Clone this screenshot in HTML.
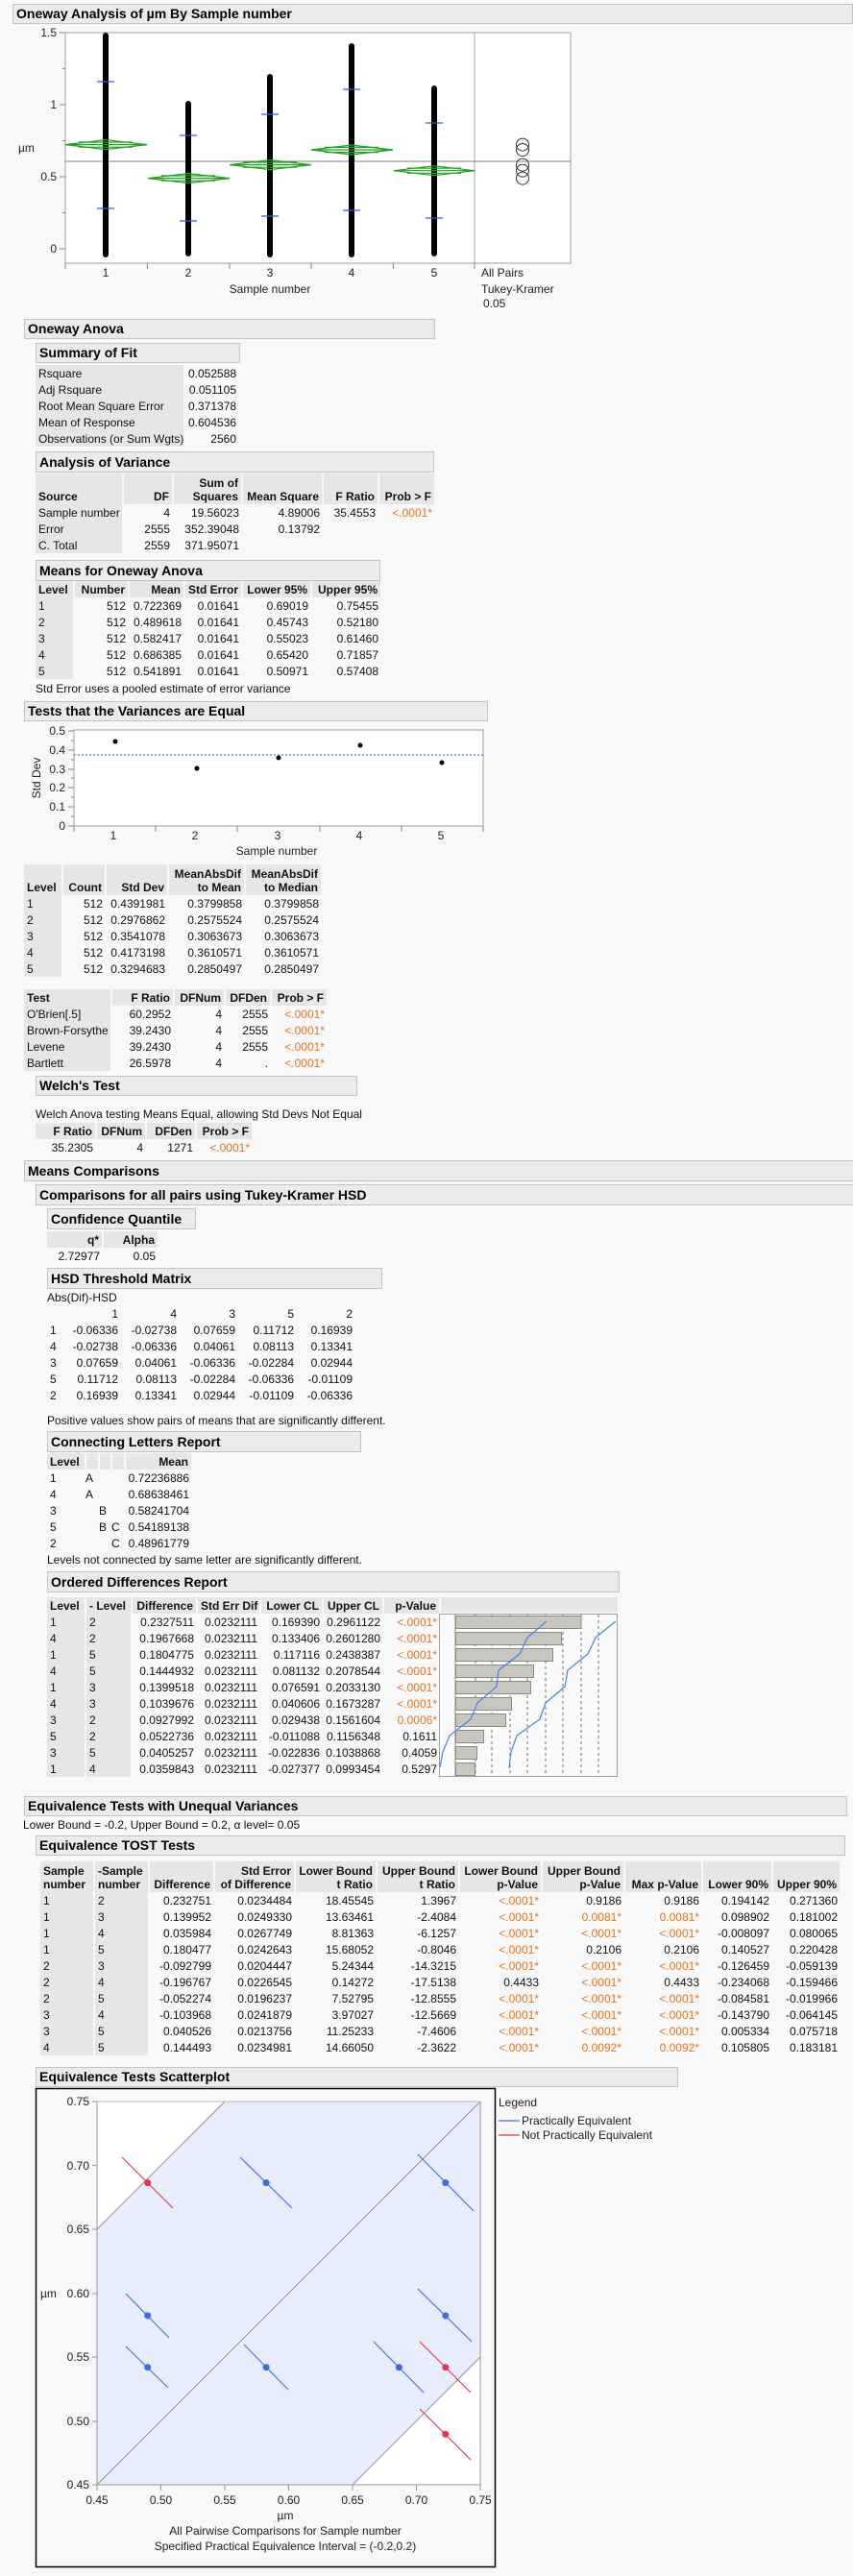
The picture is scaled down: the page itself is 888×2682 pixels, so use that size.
<!DOCTYPE html>
<html><head><meta charset="utf-8">
<style>
*{box-sizing:border-box}
body{margin:0;width:888px;height:2682px;background:#f8f8f8;font-family:"Liberation Sans",Arial,sans-serif;font-size:12px;color:#111;position:relative;overflow:hidden}
.h{position:absolute;background:#ebebeb;border:1px solid #c4c4c4;font-weight:bold;font-size:14px;padding-left:3px;white-space:nowrap;overflow:hidden;color:#000}
.x{position:absolute;white-space:nowrap;font-size:12px;line-height:14px}
table{position:absolute;border-collapse:collapse;table-layout:fixed;font-size:12px}
td,th{height:17px;padding:0 3px;white-space:nowrap;line-height:14px;overflow:hidden}
th{background:#e6e6e6;font-weight:bold;text-align:right;vertical-align:bottom;border-right:2px solid #f8f8f8;padding-bottom:1px}
td{text-align:right}
td.l{background:#e6e6e6;text-align:left;border-right:2px solid #f8f8f8}
th.l{text-align:left}
td.n{text-align:left}
.o{color:#e8731c}
svg{position:absolute;left:0;top:0}
</style></head><body>
<svg width="888" height="2682" font-family="Liberation Sans, Arial, sans-serif" font-size="12">
<!-- Plot 1 -->
<rect x="68" y="34" width="426" height="240" fill="#fff" stroke="#a0a0a0"/>
<rect x="494" y="34" width="100" height="240" fill="#fff" stroke="#a0a0a0"/>
<g stroke="#888"><line x1="62" y1="34" x2="68" y2="34"/><line x1="62" y1="109" x2="68" y2="109"/><line x1="62" y1="184" x2="68" y2="184"/><line x1="62" y1="259" x2="68" y2="259"/>
<line x1="65" y1="71.5" x2="68" y2="71.5"/><line x1="65" y1="146.5" x2="68" y2="146.5"/><line x1="65" y1="221.5" x2="68" y2="221.5"/>
<line x1="68" y1="274" x2="68" y2="280"/><line x1="153.5" y1="274" x2="153.5" y2="280"/><line x1="239" y1="274" x2="239" y2="280"/><line x1="324" y1="274" x2="324" y2="280"/><line x1="409.5" y1="274" x2="409.5" y2="280"/><line x1="494" y1="274" x2="494" y2="280"/></g>
<g text-anchor="end" fill="#222"><text x="59" y="38">1.5</text><text x="59" y="113">1</text><text x="59" y="188">0.5</text><text x="59" y="263">0</text></g>
<text x="19" y="158" fill="#222">µm</text>
<g text-anchor="middle" fill="#222"><text x="110" y="288">1</text><text x="196" y="288">2</text><text x="281" y="288">3</text><text x="366" y="288">4</text><text x="452" y="288">5</text><text x="281" y="305">Sample number</text></g>
<text x="501" y="288" fill="#222">All Pairs</text><text x="501" y="305" fill="#222">Tukey-Kramer</text><text x="503" y="320" fill="#222">0.05</text>
<line x1="68" y1="168" x2="594" y2="168" stroke="#808080"/>
<g stroke="#000" stroke-width="6" stroke-linecap="round"><line x1="110" y1="37" x2="110" y2="265"/><line x1="196" y1="108" x2="196" y2="264"/><line x1="281" y1="80" x2="281" y2="265"/><line x1="366" y1="48" x2="366" y2="265"/><line x1="452" y1="92" x2="452" y2="264"/></g>
<g stroke="#2a5ee8" stroke-width="1.2"><line x1="101" y1="85" x2="119" y2="85"/><line x1="101" y1="217" x2="119" y2="217"/><line x1="187" y1="141" x2="205" y2="141"/><line x1="187" y1="230" x2="205" y2="230"/><line x1="272" y1="119" x2="290" y2="119"/><line x1="272" y1="225" x2="290" y2="225"/><line x1="357" y1="93" x2="375" y2="93"/><line x1="357" y1="219" x2="375" y2="219"/><line x1="443" y1="128" x2="461" y2="128"/><line x1="443" y1="227" x2="461" y2="227"/></g>
<g fill="none" stroke="#22a022" stroke-width="1.2">
<polygon points="68,150.6 110,145.6 153,150.6 110,155.6"/><line x1="68" y1="150.6" x2="153" y2="150.6"/><line x1="82" y1="148" x2="138" y2="148"/><line x1="82" y1="153.2" x2="138" y2="153.2"/>
<polygon points="154,185.6 196,180.6 239,185.6 196,190.6"/><line x1="154" y1="185.6" x2="239" y2="185.6"/><line x1="168" y1="183" x2="224" y2="183"/><line x1="168" y1="188.2" x2="224" y2="188.2"/>
<polygon points="239,171.6 281,166.6 324,171.6 281,176.6"/><line x1="239" y1="171.6" x2="324" y2="171.6"/><line x1="253" y1="169" x2="309" y2="169"/><line x1="253" y1="174.2" x2="309" y2="174.2"/>
<polygon points="324,156 366,151 409,156 366,161"/><line x1="324" y1="156" x2="409" y2="156"/><line x1="338" y1="153.4" x2="394" y2="153.4"/><line x1="338" y1="158.6" x2="394" y2="158.6"/>
<polygon points="410,177.7 452,172.7 494,177.7 452,182.7"/><line x1="410" y1="177.7" x2="494" y2="177.7"/><line x1="424" y1="175.1" x2="480" y2="175.1"/><line x1="424" y1="180.3" x2="480" y2="180.3"/></g>
<g fill="none" stroke="#333"><circle cx="544" cy="150.6" r="6.5"/><circle cx="544" cy="156" r="6.5"/><circle cx="544" cy="171.6" r="6.5"/><circle cx="544" cy="177.7" r="6.5"/><circle cx="544" cy="185.6" r="6.5"/></g>

<!-- Plot 2 -->
<rect x="77" y="760" width="426" height="100" fill="#fff" stroke="#a0a0a0"/>
<g stroke="#888"><line x1="71" y1="761" x2="77" y2="761"/><line x1="71" y1="781" x2="77" y2="781"/><line x1="71" y1="801" x2="77" y2="801"/><line x1="71" y1="820" x2="77" y2="820"/><line x1="71" y1="840" x2="77" y2="840"/><line x1="71" y1="860" x2="77" y2="860"/>
<line x1="74" y1="771" x2="77" y2="771"/><line x1="74" y1="791" x2="77" y2="791"/><line x1="74" y1="810" x2="77" y2="810"/><line x1="74" y1="830" x2="77" y2="830"/><line x1="74" y1="850" x2="77" y2="850"/>
<line x1="77" y1="860" x2="77" y2="866"/><line x1="162" y1="860" x2="162" y2="866"/><line x1="247" y1="860" x2="247" y2="866"/><line x1="333" y1="860" x2="333" y2="866"/><line x1="418" y1="860" x2="418" y2="866"/><line x1="503" y1="860" x2="503" y2="866"/></g>
<g text-anchor="end" fill="#222"><text x="68" y="765">0.5</text><text x="68" y="785">0.4</text><text x="68" y="805">0.3</text><text x="68" y="824">0.2</text><text x="68" y="844">0.1</text><text x="68" y="864">0</text></g>
<text transform="translate(42,810) rotate(-90)" text-anchor="middle" fill="#222">Std Dev</text>
<g text-anchor="middle" fill="#222"><text x="118" y="874">1</text><text x="203" y="874">2</text><text x="289" y="874">3</text><text x="374" y="874">4</text><text x="459" y="874">5</text><text x="288" y="890">Sample number</text></g>
<line x1="77" y1="786" x2="503" y2="786" stroke="#2a5ee8" stroke-dasharray="2,2"/>
<g fill="#000"><circle cx="120" cy="772" r="2.5"/><circle cx="205" cy="800" r="2.5"/><circle cx="290" cy="789" r="2.5"/><circle cx="375" cy="776" r="2.5"/><circle cx="460" cy="794" r="2.5"/></g>

<!-- Ordered differences chart -->
<rect x="458" y="1663" width="185" height="16" fill="#e6e6e6"/>
<rect x="457.5" y="1680.5" width="185" height="169" fill="#fafafa" stroke="#a0a0a0"/>
<g stroke="#777" stroke-dasharray="3,3"><line x1="495" y1="1681" x2="495" y2="1850"/><line x1="512" y1="1681" x2="512" y2="1850"/><line x1="531" y1="1681" x2="531" y2="1850"/><line x1="549" y1="1681" x2="549" y2="1850"/><line x1="568" y1="1681" x2="568" y2="1850"/><line x1="586" y1="1681" x2="586" y2="1850"/><line x1="605" y1="1681" x2="605" y2="1850"/><line x1="623" y1="1681" x2="623" y2="1850"/></g>
<line x1="474" y1="1681" x2="474" y2="1850" stroke="#888"/>
<g fill="#c8c7bf" stroke="#8c8b80"><rect x="474.5" y="1682.5" width="130.5" height="13"/><rect x="474.5" y="1699.5" width="110" height="13"/><rect x="474.5" y="1716.5" width="101" height="13"/><rect x="474.5" y="1733.5" width="81" height="13"/><rect x="474.5" y="1750.5" width="78" height="13"/><rect x="474.5" y="1767.5" width="58" height="13"/><rect x="474.5" y="1784.5" width="52" height="13"/><rect x="474.5" y="1801.5" width="29" height="13"/><rect x="474.5" y="1818.5" width="22" height="13"/><rect x="474.5" y="1835.5" width="20" height="13"/></g>
<g fill="none" stroke="#4a7ff0" stroke-width="1.2"><polyline points="458,1840 461,1824 468,1807 490,1790 497,1773 517,1756 519,1739 541,1722 549,1705 569,1688"/><polyline points="530,1841 532,1824 538,1807 562,1790 568,1773 588,1756 591,1739 612,1722 620,1705 641,1688"/></g>

<!-- Scatter -->
<rect x="37.5" y="2174.5" width="478" height="498" fill="#f8f8f8" stroke="#000" stroke-width="1.5"/>
<rect x="101" y="2188" width="399" height="399" fill="#fff"/>
<polygon points="101,2587 101,2321 234,2188 500,2188 500,2454 367,2587" fill="#e8edfc"/>
<g stroke="#8a8a8a" stroke-width="0.9"><line x1="101" y1="2321" x2="234" y2="2188"/><line x1="367" y1="2587" x2="500" y2="2454"/><line x1="101" y1="2587" x2="500" y2="2188"/></g>
<g stroke="#999"><line x1="101" y1="2188" x2="101" y2="2587"/><line x1="101" y1="2587" x2="500" y2="2587"/><line x1="500" y1="2188" x2="500" y2="2587"/><line x1="101" y1="2188" x2="500" y2="2188" stroke="#bbb"/>
<line x1="96" y1="2188" x2="101" y2="2188"/><line x1="96" y1="2254.5" x2="101" y2="2254.5"/><line x1="96" y1="2321" x2="101" y2="2321"/><line x1="96" y1="2388" x2="101" y2="2388"/><line x1="96" y1="2454" x2="101" y2="2454"/><line x1="96" y1="2521" x2="101" y2="2521"/><line x1="96" y1="2587" x2="101" y2="2587"/>
<line x1="101" y1="2587" x2="101" y2="2593"/><line x1="167.5" y1="2587" x2="167.5" y2="2593"/><line x1="234" y1="2587" x2="234" y2="2593"/><line x1="300.5" y1="2587" x2="300.5" y2="2593"/><line x1="367" y1="2587" x2="367" y2="2593"/><line x1="433.5" y1="2587" x2="433.5" y2="2593"/><line x1="500" y1="2587" x2="500" y2="2593"/></g>
<g text-anchor="end" fill="#222"><text x="93" y="2192">0.75</text><text x="93" y="2259">0.70</text><text x="93" y="2325">0.65</text><text x="93" y="2392">0.60</text><text x="93" y="2458">0.55</text><text x="93" y="2525">0.50</text><text x="93" y="2591">0.45</text></g>
<text x="42" y="2392" fill="#222">µm</text>
<g text-anchor="middle" fill="#222"><text x="101" y="2607">0.45</text><text x="167.5" y="2607">0.50</text><text x="234" y="2607">0.55</text><text x="300.5" y="2607">0.60</text><text x="367" y="2607">0.65</text><text x="433.5" y="2607">0.70</text><text x="500" y="2607">0.75</text>
<text x="297" y="2623">µm</text><text x="297" y="2639">All Pairwise Comparisons for Sample number</text><text x="297" y="2655">Specified Practical Equivalence Interval = (-0.2,0.2)</text></g>
<g stroke-width="1.1">
<g stroke="#e8334a" fill="#e8334a"><line x1="127" y1="2246" x2="180" y2="2299"/><circle cx="153.7" cy="2272.6" r="3"/>
<line x1="437" y1="2438" x2="490" y2="2491"/><circle cx="463.8" cy="2464.8" r="3"/>
<line x1="437" y1="2508" x2="490" y2="2561"/><circle cx="463.8" cy="2534.3" r="3"/></g>
<g stroke="#3b6fe8" fill="#3b6fe8"><line x1="250" y1="2246" x2="304" y2="2299"/><circle cx="277.1" cy="2272.6" r="3"/>
<line x1="435" y1="2243" x2="493" y2="2302"/><circle cx="463.8" cy="2272.6" r="3"/>
<line x1="131" y1="2388" x2="176" y2="2434"/><circle cx="153.7" cy="2410.9" r="3"/>
<line x1="435" y1="2383" x2="491" y2="2438"/><circle cx="463.8" cy="2410.9" r="3"/>
<line x1="131" y1="2443" x2="175" y2="2486"/><circle cx="153.7" cy="2464.8" r="3"/>
<line x1="254" y1="2441" x2="300" y2="2488"/><circle cx="277.1" cy="2464.8" r="3"/>
<line x1="389" y1="2438" x2="441" y2="2491"/><circle cx="415.4" cy="2464.8" r="3"/></g></g>
<text x="519" y="2193" fill="#222">Legend</text>
<line x1="519" y1="2208" x2="541" y2="2208" stroke="#3b6fe8" stroke-width="1.3"/><text x="543" y="2212" fill="#222">Practically Equivalent</text>
<line x1="519" y1="2223" x2="541" y2="2223" stroke="#e8334a" stroke-width="1.3"/><text x="543" y="2227" fill="#222">Not Practically Equivalent</text>
</svg>

<div class="h" style="left:13px;top:4px;width:875px;height:21px;line-height:19px">Oneway Analysis of µm By Sample number</div>

<div class="h" style="left:25px;top:332px;width:428px;height:21px;line-height:19px">Oneway Anova</div>
<div class="h" style="left:37px;top:357px;width:213px;height:21px;line-height:19px">Summary of Fit</div>
<table style="left:37px;top:380px;width:212px"><col style="width:155px"><col style="width:57px">
<tr><td class="l">Rsquare</td><td>0.052588</td></tr>
<tr><td class="l">Adj Rsquare</td><td>0.051105</td></tr>
<tr><td class="l">Root Mean Square Error</td><td>0.371378</td></tr>
<tr><td class="l">Mean of Response</td><td>0.604536</td></tr>
<tr><td class="l">Observations (or Sum Wgts)</td><td>2560</td></tr></table>

<div class="h" style="left:37px;top:470px;width:415px;height:22px;line-height:20px">Analysis of Variance</div>
<table style="left:37px;top:493px;width:416px"><col style="width:91px"><col style="width:52px"><col style="width:72px"><col style="width:84px"><col style="width:58px"><col style="width:59px">
<tr><th class="l" style="height:32px">Source</th><th>DF</th><th>Sum of<br>Squares</th><th>Mean Square</th><th>F Ratio</th><th>Prob &gt; F</th></tr>
<tr><td class="l">Sample number</td><td>4</td><td>19.56023</td><td>4.89006</td><td>35.4553</td><td class="o">&lt;.0001*</td></tr>
<tr><td class="l">Error</td><td>2555</td><td>352.39048</td><td>0.13792</td><td></td><td></td></tr>
<tr><td class="l">C. Total</td><td>2559</td><td>371.95071</td><td></td><td></td><td></td></tr></table>

<div class="h" style="left:37px;top:583px;width:359px;height:22px;line-height:20px">Means for Oneway Anova</div>
<table style="left:37px;top:605px;width:360px"><col style="width:40px"><col style="width:57px"><col style="width:58px"><col style="width:60px"><col style="width:72px"><col style="width:73px">
<tr><th class="l">Level</th><th>Number</th><th>Mean</th><th>Std Error</th><th>Lower 95%</th><th>Upper 95%</th></tr>
<tr><td class="l">1</td><td>512</td><td>0.722369</td><td>0.01641</td><td>0.69019</td><td>0.75455</td></tr>
<tr><td class="l">2</td><td>512</td><td>0.489618</td><td>0.01641</td><td>0.45743</td><td>0.52180</td></tr>
<tr><td class="l">3</td><td>512</td><td>0.582417</td><td>0.01641</td><td>0.55023</td><td>0.61460</td></tr>
<tr><td class="l">4</td><td>512</td><td>0.686385</td><td>0.01641</td><td>0.65420</td><td>0.71857</td></tr>
<tr><td class="l">5</td><td>512</td><td>0.541891</td><td>0.01641</td><td>0.50971</td><td>0.57408</td></tr></table>
<div class="x" style="left:37px;top:710px">Std Error uses a pooled estimate of error variance</div>

<div class="h" style="left:25px;top:730px;width:483px;height:21px;line-height:19px">Tests that the Variances are Equal</div>
<table style="left:25px;top:900px;width:310px"><col style="width:40px"><col style="width:45px"><col style="width:65px"><col style="width:80px"><col style="width:80px">
<tr><th class="l" style="height:32px">Level</th><th>Count</th><th>Std Dev</th><th>MeanAbsDif<br>to Mean</th><th>MeanAbsDif<br>to Median</th></tr>
<tr><td class="l">1</td><td>512</td><td>0.4391981</td><td>0.3799858</td><td>0.3799858</td></tr>
<tr><td class="l">2</td><td>512</td><td>0.2976862</td><td>0.2575524</td><td>0.2575524</td></tr>
<tr><td class="l">3</td><td>512</td><td>0.3541078</td><td>0.3063673</td><td>0.3063673</td></tr>
<tr><td class="l">4</td><td>512</td><td>0.4173198</td><td>0.3610571</td><td>0.3610571</td></tr>
<tr><td class="l">5</td><td>512</td><td>0.3294683</td><td>0.2850497</td><td>0.2850497</td></tr></table>
<table style="left:25px;top:1030px;width:316px"><col style="width:91px"><col style="width:65px"><col style="width:53px"><col style="width:48px"><col style="width:59px">
<tr><th class="l">Test</th><th>F Ratio</th><th>DFNum</th><th>DFDen</th><th>Prob &gt; F</th></tr>
<tr><td class="l">O'Brien[.5]</td><td>60.2952</td><td>4</td><td>2555</td><td class="o">&lt;.0001*</td></tr>
<tr><td class="l">Brown-Forsythe</td><td>39.2430</td><td>4</td><td>2555</td><td class="o">&lt;.0001*</td></tr>
<tr><td class="l">Levene</td><td>39.2430</td><td>4</td><td>2555</td><td class="o">&lt;.0001*</td></tr>
<tr><td class="l">Bartlett</td><td>26.5978</td><td>4</td><td>.</td><td class="o">&lt;.0001*</td></tr></table>
<div class="h" style="left:37px;top:1120px;width:335px;height:21px;line-height:19px">Welch's Test</div>
<div class="x" style="left:37px;top:1153px">Welch Anova testing Means Equal, allowing Std Devs Not Equal</div>
<table style="left:37px;top:1169px;width:226px"><col style="width:63px"><col style="width:52px"><col style="width:52px"><col style="width:59px">
<tr><th>F Ratio</th><th>DFNum</th><th>DFDen</th><th>Prob &gt; F</th></tr>
<tr><td>35.2305</td><td>4</td><td>1271</td><td class="o">&lt;.0001*</td></tr></table>

<div class="h" style="left:25px;top:1208px;width:870px;height:22px;line-height:20px">Means Comparisons</div>
<div class="h" style="left:37px;top:1233px;width:860px;height:22px;line-height:20px">Comparisons for all pairs using Tukey-Kramer HSD</div>
<div class="h" style="left:49px;top:1258px;width:155px;height:22px;line-height:20px">Confidence Quantile</div>
<table style="left:49px;top:1282px;width:116px"><col style="width:58px"><col style="width:58px">
<tr><th>q*</th><th>Alpha</th></tr>
<tr><td>2.72977</td><td>0.05</td></tr></table>
<div class="h" style="left:49px;top:1320px;width:349px;height:22px;line-height:20px">HSD Threshold Matrix</div>
<div class="x" style="left:49px;top:1344px">Abs(Dif)-HSD</div>
<table style="left:49px;top:1359px;width:321px"><col style="width:20px"><col style="width:57px"><col style="width:61px"><col style="width:61px"><col style="width:61px"><col style="width:61px">
<tr><td style="height:16px"></td><td style="height:16px">1</td><td>4</td><td>3</td><td>5</td><td>2</td></tr>
<tr><td class="n" style="height:16px">1</td><td>-0.06336</td><td>-0.02738</td><td>0.07659</td><td>0.11712</td><td>0.16939</td></tr>
<tr><td class="n" style="height:16px">4</td><td>-0.02738</td><td>-0.06336</td><td>0.04061</td><td>0.08113</td><td>0.13341</td></tr>
<tr><td class="n" style="height:16px">3</td><td>0.07659</td><td>0.04061</td><td>-0.06336</td><td>-0.02284</td><td>0.02944</td></tr>
<tr><td class="n" style="height:16px">5</td><td>0.11712</td><td>0.08113</td><td>-0.02284</td><td>-0.06336</td><td>-0.01109</td></tr>
<tr><td class="n" style="height:16px">2</td><td>0.16939</td><td>0.13341</td><td>0.02944</td><td>-0.01109</td><td>-0.06336</td></tr></table>
<div class="x" style="left:49px;top:1472px">Positive values show pairs of means that are significantly different.</div>
<div class="h" style="left:49px;top:1490px;width:327px;height:22px;line-height:20px">Connecting Letters Report</div>
<table style="left:49px;top:1513px;width:151px"><col style="width:40px"><col style="width:14px"><col style="width:13px"><col style="width:14px"><col style="width:70px">
<tr><th class="l">Level</th><th></th><th></th><th></th><th>Mean</th></tr>
<tr><td class="n">1</td><td class="n" style="padding:0">A</td><td></td><td></td><td>0.72236886</td></tr>
<tr><td class="n">4</td><td class="n" style="padding:0">A</td><td></td><td></td><td>0.68638461</td></tr>
<tr><td class="n">3</td><td></td><td class="n" style="padding:0">B</td><td></td><td>0.58241704</td></tr>
<tr><td class="n">5</td><td></td><td class="n" style="padding:0">B</td><td class="n" style="padding:0">C</td><td>0.54189138</td></tr>
<tr><td class="n">2</td><td></td><td></td><td class="n" style="padding:0">C</td><td>0.48961779</td></tr></table>
<div class="x" style="left:49px;top:1617px">Levels not connected by same letter are significantly different.</div>

<div class="h" style="left:49px;top:1636px;width:596px;height:22px;line-height:20px">Ordered Differences Report</div>
<table style="left:49px;top:1663px;width:409px"><col style="width:40px"><col style="width:48px"><col style="width:68px"><col style="width:66px"><col style="width:65px"><col style="width:63px"><col style="width:59px">
<tr><th class="l">Level</th><th class="l">- Level</th><th>Difference</th><th>Std Err Dif</th><th>Lower CL</th><th>Upper CL</th><th>p-Value</th></tr>
<tr><td class="l">1</td><td class="l">2</td><td>0.2327511</td><td>0.0232111</td><td>0.169390</td><td>0.2961122</td><td class="o">&lt;.0001*</td></tr>
<tr><td class="l">4</td><td class="l">2</td><td>0.1967668</td><td>0.0232111</td><td>0.133406</td><td>0.2601280</td><td class="o">&lt;.0001*</td></tr>
<tr><td class="l">1</td><td class="l">5</td><td>0.1804775</td><td>0.0232111</td><td>0.117116</td><td>0.2438387</td><td class="o">&lt;.0001*</td></tr>
<tr><td class="l">4</td><td class="l">5</td><td>0.1444932</td><td>0.0232111</td><td>0.081132</td><td>0.2078544</td><td class="o">&lt;.0001*</td></tr>
<tr><td class="l">1</td><td class="l">3</td><td>0.1399518</td><td>0.0232111</td><td>0.076591</td><td>0.2033130</td><td class="o">&lt;.0001*</td></tr>
<tr><td class="l">4</td><td class="l">3</td><td>0.1039676</td><td>0.0232111</td><td>0.040606</td><td>0.1673287</td><td class="o">&lt;.0001*</td></tr>
<tr><td class="l">3</td><td class="l">2</td><td>0.0927992</td><td>0.0232111</td><td>0.029438</td><td>0.1561604</td><td class="o">0.0006*</td></tr>
<tr><td class="l">5</td><td class="l">2</td><td>0.0522736</td><td>0.0232111</td><td>-0.011088</td><td>0.1156348</td><td>0.1611</td></tr>
<tr><td class="l">3</td><td class="l">5</td><td>0.0405257</td><td>0.0232111</td><td>-0.022836</td><td>0.1038868</td><td>0.4059</td></tr>
<tr><td class="l">1</td><td class="l">4</td><td>0.0359843</td><td>0.0232111</td><td>-0.027377</td><td>0.0993454</td><td>0.5297</td></tr></table>

<div class="h" style="left:25px;top:1870px;width:857px;height:21px;line-height:19px">Equivalence Tests with Unequal Variances</div>
<div class="x" style="left:24px;top:1893px">Lower Bound = -0.2, Upper Bound = 0.2, α level= 0.05</div>
<div class="h" style="left:37px;top:1911px;width:843px;height:21px;line-height:19px">Equivalence TOST Tests</div>
<table style="left:42px;top:1938px;width:833px"><col style="width:56px"><col style="width:57px"><col style="width:68px"><col style="width:84px"><col style="width:85px"><col style="width:86px"><col style="width:86px"><col style="width:86px"><col style="width:81px"><col style="width:73px"><col style="width:71px">
<tr><th class="l" style="height:32px">Sample<br>number</th><th class="l">-Sample<br>number</th><th>Difference</th><th>Std Error<br>of Difference</th><th>Lower Bound<br>t Ratio</th><th>Upper Bound<br>t Ratio</th><th>Lower Bound<br>p-Value</th><th>Upper Bound<br>p-Value</th><th>Max p-Value</th><th>Lower 90%</th><th>Upper 90%</th></tr>
<tr><td class="l">1</td><td class="l">2</td><td>0.232751</td><td>0.0234484</td><td>18.45545</td><td>1.3967</td><td class="o">&lt;.0001*</td><td>0.9186</td><td>0.9186</td><td>0.194142</td><td>0.271360</td></tr>
<tr><td class="l">1</td><td class="l">3</td><td>0.139952</td><td>0.0249330</td><td>13.63461</td><td>-2.4084</td><td class="o">&lt;.0001*</td><td class="o">0.0081*</td><td class="o">0.0081*</td><td>0.098902</td><td>0.181002</td></tr>
<tr><td class="l">1</td><td class="l">4</td><td>0.035984</td><td>0.0267749</td><td>8.81363</td><td>-6.1257</td><td class="o">&lt;.0001*</td><td class="o">&lt;.0001*</td><td class="o">&lt;.0001*</td><td>-0.008097</td><td>0.080065</td></tr>
<tr><td class="l">1</td><td class="l">5</td><td>0.180477</td><td>0.0242643</td><td>15.68052</td><td>-0.8046</td><td class="o">&lt;.0001*</td><td>0.2106</td><td>0.2106</td><td>0.140527</td><td>0.220428</td></tr>
<tr><td class="l">2</td><td class="l">3</td><td>-0.092799</td><td>0.0204447</td><td>5.24344</td><td>-14.3215</td><td class="o">&lt;.0001*</td><td class="o">&lt;.0001*</td><td class="o">&lt;.0001*</td><td>-0.126459</td><td>-0.059139</td></tr>
<tr><td class="l">2</td><td class="l">4</td><td>-0.196767</td><td>0.0226545</td><td>0.14272</td><td>-17.5138</td><td>0.4433</td><td class="o">&lt;.0001*</td><td>0.4433</td><td>-0.234068</td><td>-0.159466</td></tr>
<tr><td class="l">2</td><td class="l">5</td><td>-0.052274</td><td>0.0196237</td><td>7.52795</td><td>-12.8555</td><td class="o">&lt;.0001*</td><td class="o">&lt;.0001*</td><td class="o">&lt;.0001*</td><td>-0.084581</td><td>-0.019966</td></tr>
<tr><td class="l">3</td><td class="l">4</td><td>-0.103968</td><td>0.0241879</td><td>3.97027</td><td>-12.5669</td><td class="o">&lt;.0001*</td><td class="o">&lt;.0001*</td><td class="o">&lt;.0001*</td><td>-0.143790</td><td>-0.064145</td></tr>
<tr><td class="l">3</td><td class="l">5</td><td>0.040526</td><td>0.0213756</td><td>11.25233</td><td>-7.4606</td><td class="o">&lt;.0001*</td><td class="o">&lt;.0001*</td><td class="o">&lt;.0001*</td><td>0.005334</td><td>0.075718</td></tr>
<tr><td class="l">4</td><td class="l">5</td><td>0.144493</td><td>0.0234981</td><td>14.66050</td><td>-2.3622</td><td class="o">&lt;.0001*</td><td class="o">0.0092*</td><td class="o">0.0092*</td><td>0.105805</td><td>0.183181</td></tr></table>

<div class="h" style="left:37px;top:2152px;width:669px;height:21px;line-height:19px">Equivalence Tests Scatterplot</div>
</body></html>
